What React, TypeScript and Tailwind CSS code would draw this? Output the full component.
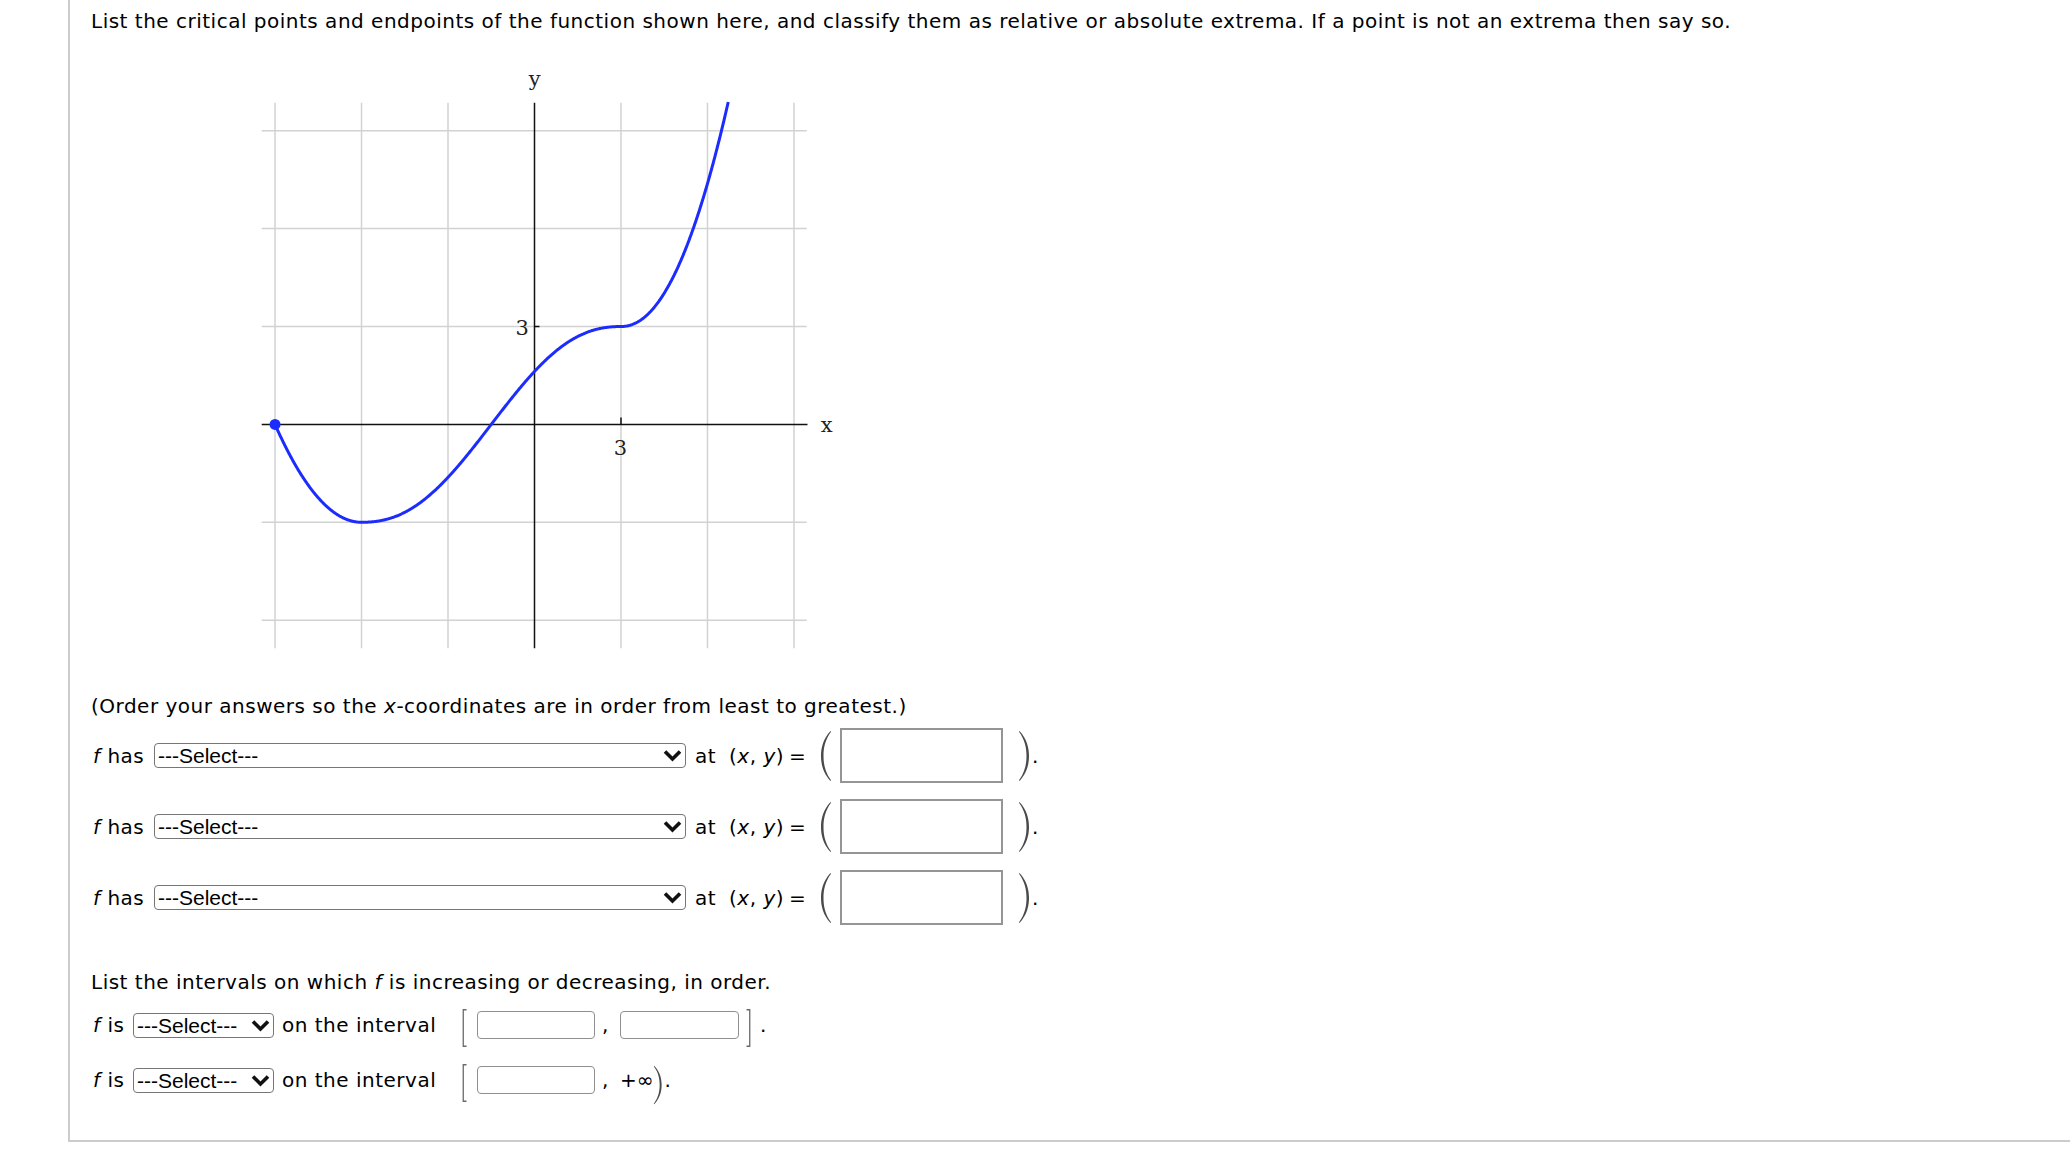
import React from "react";

// graph geometry (px inside the svg, svg sits at page x=250, y=55)
const UX = 28.83;
const UY = 32.63;
const OX = 284.5;
const OY = 369.4;
const gx = (u: number) => OX + UX * u;
const gy = (v: number) => OY - UY * v;

function f(u: number) {
  if (u <= -6) {
    const t = (u + 6) / 3;
    return -3 + 3 * t * t;
  }
  if (u <= 3) {
    const s = (u + 6) / 9;
    const a = s * s * (3 - 2 * s);
    const b = s * s * s * (s * (6 * s - 15) + 10);
    return -3 + 6 * (0.4 * a + 0.6 * b);
  }
  return 3 + 0.436 * Math.pow(u - 3, 2.1);
}

function curvePath() {
  const pts: string[] = [];
  for (let u = -9; u <= 6.735; u += 0.02) {
    pts.push(`${gx(u).toFixed(2)},${gy(f(u)).toFixed(2)}`);
  }
  return "M" + pts.join(" L");
}

function Graph() {
  const ticks = [-9, -6, -3, 0, 3, 6, 9];
  const rows = [9, 6, 3, 0, -3, -6];
  return (
    <svg width="600" height="620" viewBox="0 0 600 620" className="ml-[159px] mt-[22px] block">
      {ticks
        .filter((u) => u !== 0)
        .map((u) => (
          <line key={`v${u}`} x1={gx(u)} x2={gx(u)} y1={47.7} y2={593.3} stroke="#d2d2d2" strokeWidth="1.5" />
        ))}
      {rows
        .filter((v) => v !== 0)
        .map((v) => (
          <line key={`h${v}`} x1={11.7} x2={556.7} y1={gy(v)} y2={gy(v)} stroke="#d2d2d2" strokeWidth="1.5" />
        ))}
      <line x1={OX} x2={OX} y1={47.7} y2={593.3} stroke="#111" strokeWidth="1.5" />
      <line x1={11.7} x2={557.5} y1={OY} y2={OY} stroke="#111" strokeWidth="1.5" />
      <line x1={OX} x2={OX + 5} y1={gy(3)} y2={gy(3)} stroke="#111" strokeWidth="1.5" />
      <line x1={gx(3)} x2={gx(3)} y1={OY - 7} y2={OY} stroke="#111" strokeWidth="1.5" />
      <g fontFamily="'DejaVu Serif', 'Liberation Serif', serif" fontSize="21" fill="#222">
        <text x={285} y={31} textAnchor="middle">y</text>
        <text x={577} y={377} textAnchor="middle">x</text>
        <text x={272.5} y={280} textAnchor="middle">3</text>
        <text x={370.8} y={400} textAnchor="middle">3</text>
      </g>
      <path d={curvePath()} fill="none" stroke="#1c2cff" strokeWidth="3" strokeLinejoin="round" />
      <circle cx={gx(-9)} cy={OY} r="5.5" fill="#1c2cff" />
    </svg>
  );
}

function Chevron() {
  return (
    <svg width="21" height="13" viewBox="0 0 21 13" className="shrink-0">
      <path d="M3 2.5 L10.5 10 L18 2.5" fill="none" stroke="#111" strokeWidth="3.6" />
    </svg>
  );
}

function Select({ w }: { w: string }) {
  return (
    <div
      className={`${w} flex h-[25px] shrink-0 items-center justify-between rounded-[4px] border border-[#767676] bg-white pl-[3px] pr-[2px] font-['Liberation_Sans',Arial,sans-serif] text-[21px] leading-none tracking-normal text-black`}
    >
      <span>---Select---</span>
      <Chevron />
    </div>
  );
}

function Paren({ right, w, h }: { right?: boolean; w: number; h: number }) {
  const d = right
    ? "M1.5 1 C9 9 11 18 11 26 C11 34 9 43 1.5 51 L1 50.3 C7 42 8.5 34 8.5 26 C8.5 18 7 10 1 1.7 Z"
    : "M12.5 1 C5 9 3 18 3 26 C3 34 5 43 12.5 51 L13 50.3 C7 42 5.5 34 5.5 26 C5.5 18 7 10 13 1.7 Z";
  return (
    <svg width={w} height={h} viewBox="0 0 14 52" preserveAspectRatio="none" className="shrink-0">
      <path d={d} fill="#4a4a4a" />
    </svg>
  );
}

function Bracket({ right }: { right?: boolean }) {
  return (
    <svg width="5" height="38" viewBox="0 0 5 38" className="-mt-[2px] shrink-0 self-start">
      <path
        d={right ? "M0.5 0.75 H3.75 V37.25 H0.5" : "M4.5 0.75 H1.25 V37.25 H4.5"}
        fill="none"
        stroke="#6a6a6a"
        strokeWidth="1.3"
      />
    </svg>
  );
}

function PointRow({ first }: { first?: boolean }) {
  return (
    <div className={`flex h-[55px] items-center ${first ? "mt-[10px]" : "mt-[16px]"}`}>
      <span className="w-[63px] shrink-0 pl-[2px]">
        <i>f</i> has
      </span>
      <Select w="w-[532px]" />
      <span className="ml-[9px] w-[34px] shrink-0">at</span>
      <span className="w-[89px] shrink-0 whitespace-nowrap">
        (<i>x</i>, <i>y</i>)<span className="ml-[5px]">=</span>
      </span>
      <Paren w={14} h={52} />
      <div className="ml-[8px] h-[55px] w-[163px] shrink-0 border-2 border-[#959595] bg-white" />
      <span className="ml-[15px]">
        <Paren right w={14} h={52} />
      </span>
      <span>.</span>
    </div>
  );
}

function IntervalInput({ w }: { w: string }) {
  return <div className={`${w} h-[28px] shrink-0 rounded-[4px] border-[1.5px] border-[#8f8f8f] bg-white`} />;
}

function IntervalRow({ open }: { open?: boolean }) {
  return (
    <div className={`flex h-[28px] items-center ${open ? "mt-[27px]" : "mt-[17px]"}`}>
      <span className="w-[42px] shrink-0 pl-[2px]">
        <i>f</i> is
      </span>
      <Select w="w-[141px]" />
      <span className="ml-[8px] w-[180px] shrink-0 whitespace-nowrap">on the interval</span>
      <Bracket />
      <div className="ml-[10px]">
        <IntervalInput w="w-[118px]" />
      </div>
      <span className="w-[25px] shrink-0 pl-[7px]">,</span>
      {open ? (
        <>
          <span className="whitespace-nowrap tracking-normal">+∞</span>
          <svg width="11" height="40" viewBox="0 0 14 52" preserveAspectRatio="none" className="-mt-[1px] shrink-0 self-start">
            <path
              d="M1.5 1 C9 9 11 18 11 26 C11 34 9 43 1.5 51 L1 50.3 C7 42 8.5 34 8.5 26 C8.5 18 7 10 1 1.7 Z"
              fill="#4a4a4a"
            />
          </svg>
          <span>.</span>
        </>
      ) : (
        <>
          <IntervalInput w="w-[119px]" />
          <span className="ml-[7px] flex self-start">
            <Bracket right />
          </span>
          <span className="ml-[9px]">.</span>
        </>
      )}
    </div>
  );
}

export default function App() {
  return (
    <div className="h-[1156px] w-[2070px] overflow-hidden bg-white font-['DejaVu_Sans',Verdana,sans-serif] text-[20px] leading-[24px] tracking-[0.5px] text-black">
      <div className="ml-[68px] h-[1142px] w-[2002px] border-b-2 border-l-2 border-[#cccccc] pl-[21px] pt-[9px]">
        <p className="whitespace-nowrap">
          List the critical points and endpoints of the function shown here, and classify them as relative or absolute
          extrema. If a point is not an extrema then say so.
        </p>

        <Graph />

        <p className="mt-[19px] whitespace-nowrap">
          (Order your answers so the <i>x</i>-coordinates are in order from least to greatest.)
        </p>

        <PointRow first />
        <PointRow />
        <PointRow />

        <p className="mt-[45px] whitespace-nowrap">
          List the intervals on which <i>f</i> is increasing or decreasing, in order.
        </p>

        <IntervalRow />
        <IntervalRow open />
      </div>
    </div>
  );
}
